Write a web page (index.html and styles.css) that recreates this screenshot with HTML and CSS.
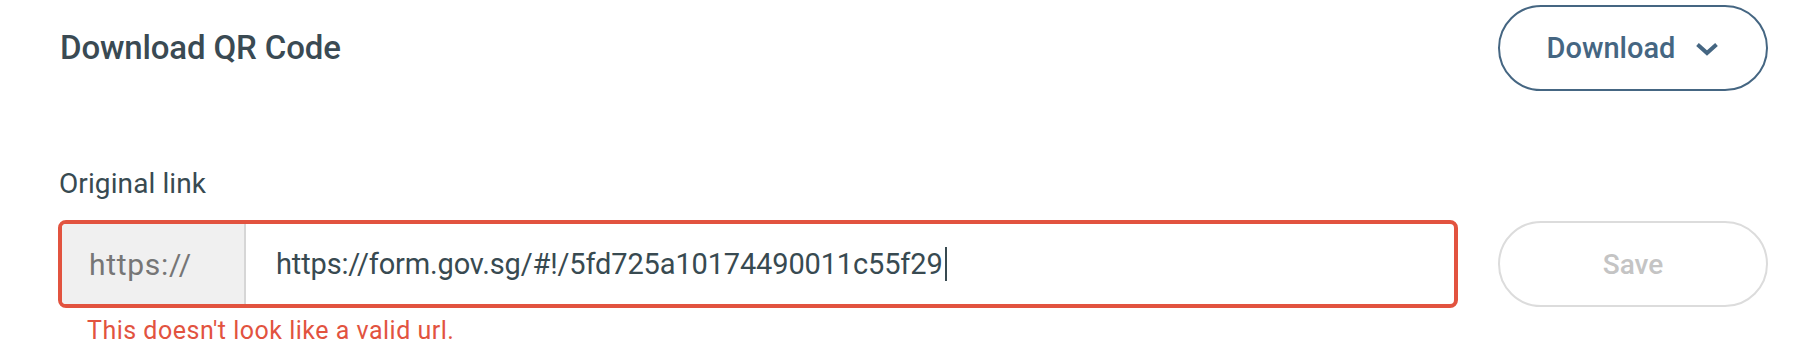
FILE: index.html
```html
<!DOCTYPE html>
<html lang="en">
<head>
<meta charset="utf-8">
<title>Download QR Code</title>
<link rel="stylesheet" href="styles.css">
</head>
<body>
<div class="page">
  <div class="header">
    <h2 class="title">Download QR Code</h2>
    <button class="btn btn-download" type="button">
      <span>Download</span>
      <svg class="chevron" width="24" height="14" viewBox="0 0 24 14" aria-hidden="true">
        <polyline points="2.5,2.5 12,11 21.5,2.5" fill="none" stroke="currentColor" stroke-width="4" stroke-linejoin="miter"/>
      </svg>
    </button>
  </div>
  <div class="field">
    <div class="label">Original link</div>
    <div class="row">
      <div class="col-main">
        <div class="input-group">
          <span class="prefix">https://</span>
          <div class="input"><span class="value">https://form.gov.sg/#!/5fd725a10174490011c55f29</span><span class="caret"></span></div>
        </div>
        <div class="error">This doesn't look like a valid url.</div>
      </div>
      <button class="btn btn-save" type="button">Save</button>
    </div>
  </div>
</div>
</body>
</html>
```

FILE: styles.css
```css
* { box-sizing: border-box; }
html, body { margin: 0; padding: 0; background: #ffffff; }
body { font-family: Roboto, "Liberation Sans", sans-serif; color: #384a51; }

.page {
  padding: 5px 32px 0 58px;
}

.header {
  display: flex;
  align-items: center;
  justify-content: space-between;
  height: 86px;
}

.title {
  margin: 0;
  padding-left: 2px;
  font-size: 33px;
  font-weight: 500;
  letter-spacing: -0.15px;
  line-height: 40px;
  color: #3a4a53;
}

.btn {
  width: 270px;
  height: 86px;
  border-radius: 43px;
  background: #ffffff;
  font-family: inherit;
  display: flex;
  align-items: center;
  justify-content: center;
  padding: 0;
  cursor: pointer;
}

.btn-download {
  border: 2px solid #456682;
  color: #456682;
  font-size: 29px;
  font-weight: 500;
  gap: 20px;
}

.chevron { display: block; margin-top: 2px; }

.field { margin-top: 75px; }

.label {
  font-size: 28px;
  line-height: 36px;
  letter-spacing: 0.1px;
  color: #384a51;
  padding-left: 1px;
}

.row {
  display: flex;
  gap: 40px;
  margin-top: 18px;
}

.col-main { flex: 1; }

.input-group {
  display: flex;
  height: 88px;
  border: 4px solid #e2533f;
  border-radius: 8px;
  overflow: hidden;
}

.prefix {
  width: 184px;
  background: #f0f0f0;
  border-right: 2px solid #d6d6d6;
  color: #767676;
  font-size: 30px;
  letter-spacing: 0.7px;
  display: flex;
  align-items: center;
  padding-left: 27px;
}

.input {
  flex: 1;
  display: flex;
  align-items: center;
  padding-left: 30px;
  font-size: 29px;
  letter-spacing: -0.15px;
  color: #384a51;
}

.caret {
  display: inline-block;
  width: 2px;
  height: 34px;
  background: #384a51;
  margin-left: 2px;
}

.error {
  margin-top: 7px;
  padding-left: 29px;
  font-size: 25px;
  letter-spacing: 0.5px;
  line-height: 32px;
  color: #e2533f;
}

.btn-save {
  margin-top: 1px;
  border: 2px solid #dcdcdc;
  color: #c4c4c4;
  font-size: 28px;
  font-weight: 500;
}
```
